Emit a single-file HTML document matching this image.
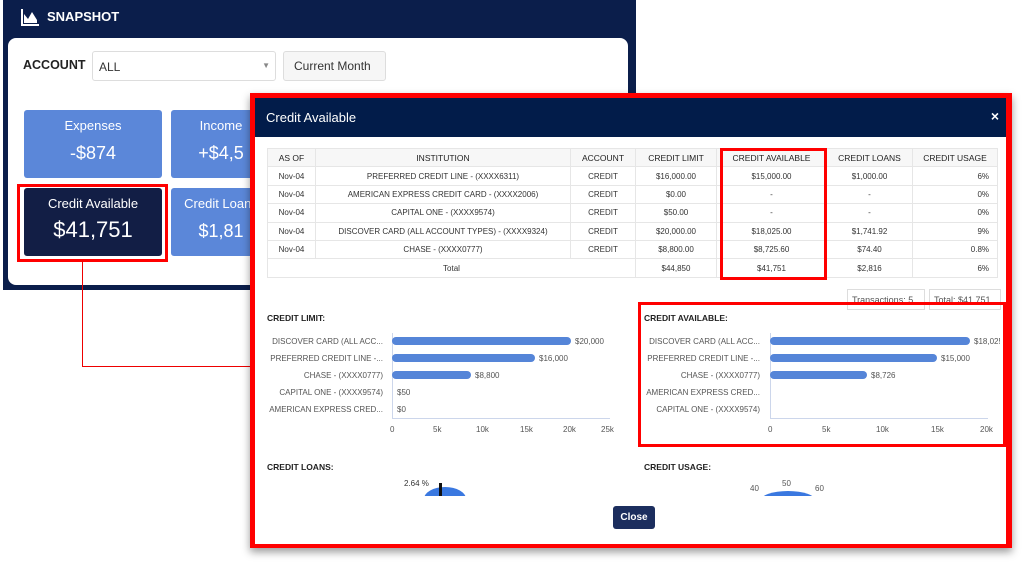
<!DOCTYPE html>
<html><head><meta charset="utf-8"><style>
*{box-sizing:border-box;margin:0;padding:0}
body{width:1024px;height:564px;background:#fff;font-family:"Liberation Sans",sans-serif;position:relative;overflow:hidden}
.abs{position:absolute}
.tile{position:absolute;color:#fff;text-align:center;border-radius:3px}
.tile .t{font-size:13px;margin-top:8px}
.tile .v{font-size:18px;margin-top:10px}
table{border-collapse:collapse;font-size:8px;color:#333;width:731px}
td,th{border:1px solid #e6e6e6;height:18.4px;text-align:center;font-weight:normal}
th{font-size:8.5px;color:#222;background:#f7f7f7}
.lbl{font-size:8px;color:#555;text-align:right;width:115px}
.bar{position:absolute;height:8px;background:#5585d8;border-radius:4px}
.bt{font-size:8px;color:#555;position:absolute}
.h{font-size:8.5px;font-weight:bold;color:#222;position:absolute}
</style></head><body>
<div class="abs" style="left:3px;top:0;width:633px;height:290px;background:#0b1e4b"></div>
<svg class="abs" style="left:20px;top:8px" width="20" height="18"><path d="M2 1V17H19" stroke="#fff" stroke-width="2" fill="none"/><path d="M4 15L4 6L8 11L12 4L17 12V15Z" fill="#fff"/></svg>
<div class="abs" style="left:47px;top:9px;color:#fff;font-size:13px;font-weight:bold">SNAPSHOT</div>
<div class="abs" style="left:8px;top:38px;width:620px;height:247px;background:#fff;border-radius:8px"></div>
<div class="abs" style="left:23px;top:58px;font-size:12.5px;font-weight:bold;color:#222">ACCOUNT</div>
<div class="abs" style="left:92px;top:51px;width:184px;height:30px;border:1px solid #ddd;border-radius:3px;font-size:12px;color:#333;padding:8px 0 0 6px">ALL<span style="position:absolute;right:5px;top:9px;font-size:8px;color:#888">▼</span></div>
<div class="abs" style="left:283px;top:51px;width:103px;height:30px;border:1px solid #ddd;border-radius:3px;background:#f6f6f6;font-size:12px;color:#333;padding:7px 0 0 10px">Current Month</div>
<div class="tile" style="left:24px;top:110px;width:138px;height:68px;background:#5b87d9"><div class="t">Expenses</div><div class="v">-$874</div></div>
<div class="tile" style="left:171px;top:110px;width:100px;height:68px;background:#5b87d9"><div class="t">Income</div><div class="v">+$4,5</div></div>
<div class="abs" style="left:17px;top:184px;width:151px;height:78px;border:3px solid #f00"></div>
<div class="tile" style="left:24px;top:188px;width:138px;height:68px;background:#121e45"><div class="t">Credit Available</div><div class="v" style="font-size:22px;margin-top:6px">$41,751</div></div>
<div class="tile" style="left:171px;top:188px;width:100px;height:68px;background:#5b87d9"><div class="t">Credit Loans</div><div class="v">$1,81</div></div>
<div class="abs" style="left:82px;top:261px;width:1px;height:106px;background:#e00"></div>
<div class="abs" style="left:82px;top:366px;width:545px;height:1px;background:#e00"></div>
<div class="abs" style="left:623px;top:361px;width:0;height:0;border-top:6px solid transparent;border-bottom:6px solid transparent;border-left:10px solid #e00"></div>

<div class="abs" style="left:250px;top:93px;width:762px;height:455px;background:#f00;box-shadow:0 4px 8px rgba(0,0,0,.4)"></div>
<div class="abs" style="left:255px;top:98px;width:751px;height:446px;background:#fff;overflow:hidden">
 <div style="height:39px;background:#021c4a;color:#fff;font-size:13px;padding:12px 0 0 11px">Credit Available<span style="position:absolute;right:7px;top:10px;font-weight:bold;font-size:14px">×</span></div>
 <table class="abs" style="left:12px;top:50px">
 <tr><th style="width:48px">AS OF</th><th style="width:255px">INSTITUTION</th><th style="width:65px">ACCOUNT</th><th style="width:81px">CREDIT LIMIT</th><th style="width:110px">CREDIT AVAILABLE</th><th style="width:86px">CREDIT LOANS</th><th>CREDIT USAGE</th></tr>
 <tr><td>Nov-04</td><td>PREFERRED CREDIT LINE - (XXXX6311)</td><td>CREDIT</td><td>$16,000.00</td><td>$15,000.00</td><td>$1,000.00</td><td style="text-align:right;padding-right:8px">6%</td></tr>
 <tr><td>Nov-04</td><td>AMERICAN EXPRESS CREDIT CARD - (XXXX2006)</td><td>CREDIT</td><td>$0.00</td><td>-</td><td>-</td><td style="text-align:right;padding-right:8px">0%</td></tr>
 <tr><td>Nov-04</td><td>CAPITAL ONE - (XXXX9574)</td><td>CREDIT</td><td>$50.00</td><td>-</td><td>-</td><td style="text-align:right;padding-right:8px">0%</td></tr>
 <tr><td>Nov-04</td><td>DISCOVER CARD (ALL ACCOUNT TYPES) - (XXXX9324)</td><td>CREDIT</td><td>$20,000.00</td><td>$18,025.00</td><td>$1,741.92</td><td style="text-align:right;padding-right:8px">9%</td></tr>
 <tr><td>Nov-04</td><td>CHASE - (XXXX0777)</td><td>CREDIT</td><td>$8,800.00</td><td>$8,725.60</td><td>$74.40</td><td style="text-align:right;padding-right:8px">0.8%</td></tr>
 <tr><td colspan="3">Total</td><td>$44,850</td><td>$41,751</td><td>$2,816</td><td style="text-align:right;padding-right:8px">6%</td></tr>
 </table>
</div>
<div class="abs" style="left:720px;top:148px;width:107px;height:132px;border:3px solid #f00"></div>
<div class="abs" style="left:847px;top:289px;width:78px;height:21px;border:1px solid #ddd;font-size:9px;color:#555;padding:5px 0 0 4px">Transactions: 5</div>
<div class="abs" style="left:929px;top:289px;width:72px;height:21px;border:1px solid #ddd;font-size:9px;color:#555;padding:5px 0 0 4px;overflow:hidden;white-space:nowrap">Total: $41,751</div>

<div class="h" style="left:267px;top:313px">CREDIT LIMIT:</div>
<div class="abs" style="left:392px;top:333px;width:1px;height:85px;background:#ccd6eb"></div>
<div class="abs" style="left:392px;top:418px;width:218px;height:1px;background:#ccd6eb"></div>
<div class="bt lbl" style="left:268px;top:337px">DISCOVER CARD (ALL ACC...</div>
<div class="bt lbl" style="left:268px;top:354px">PREFERRED CREDIT LINE -...</div>
<div class="bt lbl" style="left:268px;top:371px">CHASE - (XXXX0777)</div>
<div class="bt lbl" style="left:268px;top:388px">CAPITAL ONE - (XXXX9574)</div>
<div class="bt lbl" style="left:268px;top:405px">AMERICAN EXPRESS CRED...</div>
<div class="bar" style="left:392px;top:337px;width:179px"></div><div class="bt" style="left:575px;top:337px">$20,000</div>
<div class="bar" style="left:392px;top:354px;width:143px"></div><div class="bt" style="left:539px;top:354px">$16,000</div>
<div class="bar" style="left:392px;top:371px;width:79px"></div><div class="bt" style="left:475px;top:371px">$8,800</div>
<div class="bt" style="left:397px;top:388px">$50</div><div class="bt" style="left:397px;top:405px">$0</div>
<div class="bt" style="left:390px;top:425px">0</div><div class="bt" style="left:433px;top:425px">5k</div><div class="bt" style="left:476px;top:425px">10k</div><div class="bt" style="left:520px;top:425px">15k</div><div class="bt" style="left:563px;top:425px">20k</div><div class="bt" style="left:601px;top:425px">25k</div>

<div class="abs" style="left:638px;top:302px;width:368px;height:145px;border:3px solid #f00"></div>
<div class="h" style="left:644px;top:313px">CREDIT AVAILABLE:</div>
<div class="abs" style="left:770px;top:333px;width:1px;height:85px;background:#ccd6eb"></div>
<div class="abs" style="left:770px;top:418px;width:218px;height:1px;background:#ccd6eb"></div>
<div class="bt lbl" style="left:645px;top:337px">DISCOVER CARD (ALL ACC...</div>
<div class="bt lbl" style="left:645px;top:354px">PREFERRED CREDIT LINE -...</div>
<div class="bt lbl" style="left:645px;top:371px">CHASE - (XXXX0777)</div>
<div class="bt lbl" style="left:645px;top:388px">AMERICAN EXPRESS CRED...</div>
<div class="bt lbl" style="left:645px;top:405px">CAPITAL ONE - (XXXX9574)</div>
<div class="bar" style="left:770px;top:337px;width:200px"></div><div class="bt" style="left:974px;top:337px;width:26px;overflow:hidden;white-space:nowrap">$18,025</div>
<div class="bar" style="left:770px;top:354px;width:167px"></div><div class="bt" style="left:941px;top:354px">$15,000</div>
<div class="bar" style="left:770px;top:371px;width:97px"></div><div class="bt" style="left:871px;top:371px">$8,726</div>
<div class="bt" style="left:768px;top:425px">0</div><div class="bt" style="left:822px;top:425px">5k</div><div class="bt" style="left:876px;top:425px">10k</div><div class="bt" style="left:931px;top:425px">15k</div><div class="bt" style="left:980px;top:425px">20k</div>

<div class="h" style="left:267px;top:462px">CREDIT LOANS:</div>
<div class="h" style="left:644px;top:462px">CREDIT USAGE:</div>
<div class="bt" style="left:404px;top:479px;color:#333">2.64 %</div>
<div class="abs" style="left:424px;top:487px;width:42px;height:9px;overflow:hidden"><div style="width:42px;height:24px;border-radius:50%;background:#3a78e0"></div></div>
<div class="abs" style="left:439px;top:483px;width:3px;height:13px;background:#111"></div>
<div class="bt" style="left:750px;top:484px">40</div><div class="bt" style="left:782px;top:479px">50</div><div class="bt" style="left:815px;top:484px">60</div>
<div class="abs" style="left:760px;top:491px;width:56px;height:5px;overflow:hidden"><div style="width:56px;height:20px;border-radius:50%;background:#3a78e0"></div></div>
<div class="abs" style="left:613px;top:506px;width:42px;height:23px;background:#1c2e5e;border-radius:3px;color:#fff;font-size:10px;font-weight:bold;text-align:center;padding-top:6px">Close</div>
</body></html>
